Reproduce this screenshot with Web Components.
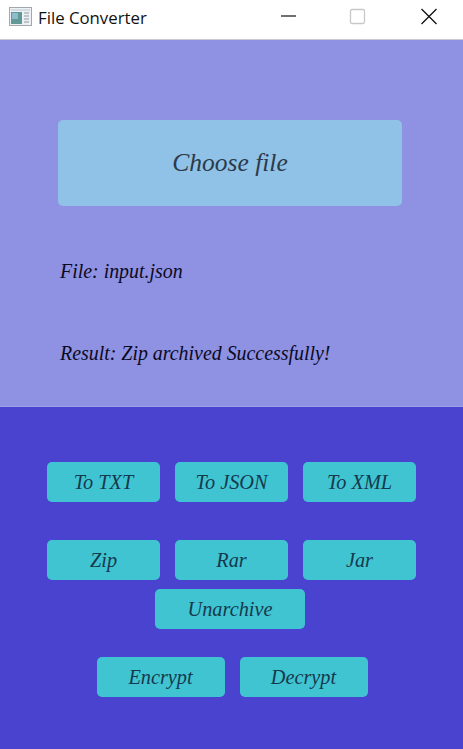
<!DOCTYPE html>
<html>
<head>
<meta charset="utf-8">
<title>File Converter</title>
<style>
html,body{margin:0;padding:0;height:100%;}
body{font-family:"Liberation Serif",serif;}
</style>
</head>
<body>
<app-window>
  <title-bar>File Converter</title-bar>
  <file-panel file="input.json" result="Zip archived Successfully!"></file-panel>
  <action-panel>
    <button-row slot="convert">
      <action-button>To TXT</action-button>
      <action-button>To JSON</action-button>
      <action-button>To XML</action-button>
    </button-row>
    <button-row slot="archive">
      <action-button>Zip</action-button>
      <action-button>Rar</action-button>
      <action-button>Jar</action-button>
    </button-row>
    <button-row slot="unarchive" class="unarchive">
      <action-button wide>Unarchive</action-button>
    </button-row>
    <button-row slot="crypt" class="crypt">
      <action-button mid>Encrypt</action-button>
      <action-button mid>Decrypt</action-button>
    </button-row>
  </action-panel>
</app-window>

<script>
class AppWindow extends HTMLElement{
  constructor(){
    super();
    this.attachShadow({mode:"open"});
    this.shadowRoot.innerHTML = `
    <style>
    :host{display:flex;flex-direction:column;width:463px;height:749px;overflow:hidden;background:#fff;}
    </style>
    <slot></slot>`;
  }
}

class TitleBar extends HTMLElement{
  constructor(){
    super();
    this.attachShadow({mode:"open"});
    this.shadowRoot.innerHTML = `
    <style>
    :host{display:flex;align-items:center;height:34px;padding-bottom:5px;flex:none;background:#fff;border-bottom:1px solid #c9c9d6;
      font:16.8px "Open Sans","Noto Sans",sans-serif;color:#111;}
    .icon{margin:0 6px 1px 9px;flex:none;}
    .name{flex:1;}
    .ctl{width:24px;height:24px;flex:none;display:block;}
    .min{margin-right:45px;}
    .max{margin-right:47px;}
    .close{margin-right:22px;}
    </style>
    <svg class="icon" width="23" height="19" viewBox="0 0 23 19">
      <rect x="0.5" y="0.5" width="22" height="18" fill="#eef1f3" stroke="#a3a8ae"/>
      <rect x="2" y="2" width="19" height="2" fill="#d3dce3"/>
      <rect x="2" y="5" width="11" height="12" fill="#5f9a96"/>
      <rect x="3" y="6" width="6" height="6" fill="#8fbccb"/>
      <path d="M15 6h5M15 9h5M15 12h5M15 15h5" stroke="#8e99a2" stroke-width="1.2"/>
    </svg>
    <span class="name"><slot></slot></span>
    <svg class="ctl min" viewBox="0 0 24 24"><path d="M4 11H19" stroke="#111" stroke-width="1.2"/></svg>
    <svg class="ctl max" viewBox="0 0 24 24"><rect x="4.5" y="4.5" width="14" height="14" rx="1.5" fill="none" stroke="#c8c8c8" stroke-width="1.3"/></svg>
    <svg class="ctl close" viewBox="0 0 24 24"><path d="M4.5 4L19.5 19M19.5 4L4.5 19" stroke="#111" stroke-width="1.3"/></svg>`;
  }
}

class FilePanel extends HTMLElement{
  constructor(){
    super();
    this.attachShadow({mode:"open"});
    this.shadowRoot.innerHTML = `
    <style>
    :host{display:block;height:367px;flex:none;box-sizing:border-box;padding:80px 61px 0 58px;background:#8f91e2;border-bottom:1px solid #9c9ee8;}
    .choose{height:86px;border-radius:5px;background:#8fc2e6;display:flex;align-items:center;justify-content:center;
      font:italic 25.5px "Liberation Serif",serif;color:#2c3a4a;}
    p{margin:0 0 0 2px;font:italic 19.9px/24px "Liberation Serif",serif;color:#0a0a1e;}
    .file{margin-top:53px;}
    .result{margin-top:58px;}
    </style>
    <div class="choose">Choose file</div>
    <p class="file"></p>
    <p class="result"></p>`;
  }
  connectedCallback(){
    this.shadowRoot.querySelector(".file").textContent = "File: " + this.getAttribute("file");
    this.shadowRoot.querySelector(".result").textContent = "Result: " + this.getAttribute("result");
  }
}

class ActionPanel extends HTMLElement{
  constructor(){
    super();
    this.attachShadow({mode:"open"});
    this.shadowRoot.innerHTML = `
    <style>
    :host{display:flex;flex-direction:column;flex:1;box-sizing:border-box;padding-top:55px;background:#4a43cf;}
    .convert{margin-bottom:38px;}
    .archive{margin-bottom:9px;}
    .unarchive{margin-bottom:28px;}
    </style>
    <div class="convert"><slot name="convert"></slot></div>
    <div class="archive"><slot name="archive"></slot></div>
    <div class="unarchive"><slot name="unarchive"></slot></div>
    <div><slot name="crypt"></slot></div>`;
  }
}

class ButtonRow extends HTMLElement{
  constructor(){
    super();
    this.attachShadow({mode:"open"});
    this.shadowRoot.innerHTML = `
    <style>
    :host{display:flex;justify-content:center;gap:15px;}
    :host(.unarchive){padding-right:3px;}
    :host(.crypt){padding-left:1px;}
    </style>
    <slot></slot>`;
  }
}

class ActionButton extends HTMLElement{
  constructor(){
    super();
    this.attachShadow({mode:"open"});
    this.shadowRoot.innerHTML = `
    <style>
    :host{display:flex;align-items:center;justify-content:center;width:113px;height:40px;border-radius:5px;background:#40c4d2;
      font:italic 20.3px "Liberation Serif",serif;color:#15394d;}
    :host([wide]){width:150px;}
    :host([mid]){width:128px;}
    </style>
    <slot></slot>`;
  }
}

customElements.define("app-window",AppWindow);
customElements.define("title-bar",TitleBar);
customElements.define("file-panel",FilePanel);
customElements.define("action-panel",ActionPanel);
customElements.define("button-row",ButtonRow);
customElements.define("action-button",ActionButton);
</script>
</body>
</html>
